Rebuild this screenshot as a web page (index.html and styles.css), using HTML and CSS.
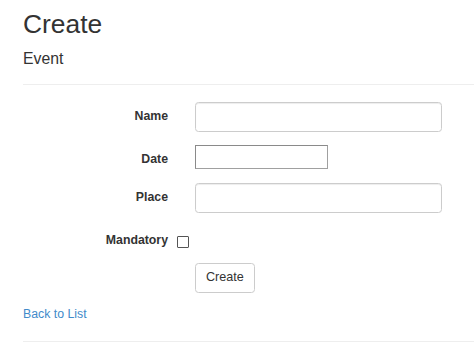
FILE: index.html
```html
<!DOCTYPE html>
<html lang="en">

<head>
    <meta charset="UTF-8">
    <meta name="viewport" content="width=device-width, initial-scale=1.0">
    <title>Create - Event</title>
    <link rel="stylesheet" href="styles.css">
</head>

<body>
    <div class="container">
        <h2>Create</h2>

        <form class="form-horizontal">
            <h4>Event</h4>
            <hr>

            <div class="form-group">
                <label class="control-label" for="Name">Name</label>
                <div class="field">
                    <input class="form-control" id="Name" name="Name" type="text">
                </div>
            </div>

            <div class="form-group">
                <label class="control-label" for="Date">Date</label>
                <div class="field">
                    <input class="date-input" id="Date" name="Date" type="text">
                </div>
            </div>

            <div class="form-group">
                <label class="control-label" for="Place">Place</label>
                <div class="field">
                    <input class="form-control" id="Place" name="Place" type="text">
                </div>
            </div>

            <div class="form-group">
                <label class="control-label" for="Mandatory">Mandatory</label>
                <input class="check" id="Mandatory" name="Mandatory" type="checkbox">
            </div>

            <div class="form-group">
                <div class="field offset">
                    <input type="submit" value="Create" class="btn">
                </div>
            </div>
        </form>

        <div class="back">
            <a href="#">Back to List</a>
        </div>

        <hr class="footer-line">
    </div>
</body>

</html>
```

FILE: styles.css
```css
body {
    margin: 0;
    padding: 0;
    font-family: "Liberation Sans", Arial, sans-serif;
    font-size: 12.3px;
    line-height: 17.6px;
    color: #333;
    background-color: #fff;
}

.container {
    padding-left: 23px;
    overflow: hidden;
}

h2 {
    font-size: 26.4px;
    font-weight: normal;
    line-height: 29px;
    margin: 10px 0 0;
}

h4 {
    font-size: 15.8px;
    font-weight: normal;
    line-height: 17.4px;
    margin: 11px 0 0;
}

hr {
    border: 0;
    border-top: 1px solid #eee;
    margin: 17px 0 17px;
}

.form-group {
    display: flex;
    align-items: flex-start;
    margin-bottom: 13px;
}

.control-label {
    width: 145px;
    flex-shrink: 0;
    padding-top: 6px;
    text-align: right;
    font-weight: bold;
}

.field {
    padding-left: 27px;
}

.offset {
    margin-left: 145px;
}

.form-control {
    display: block;
    box-sizing: border-box;
    width: 247px;
    height: 30px;
    padding: 5px 10px;
    font: inherit;
    color: #555;
    border: 1px solid #ccc;
    border-radius: 3.5px;
    box-shadow: inset 0 1px 1px rgba(0, 0, 0, 0.075);
    margin: 0;
}

.date-input {
    display: block;
    box-sizing: border-box;
    width: 133px;
    height: 24px;
    margin: 0 0 1px;
    padding: 2px 4px;
    font: inherit;
    border: 1px solid #a0a0a0;
    border-top-color: #8a8a8a;
    border-left-color: #8a8a8a;
    border-radius: 0;
}

.check {
    appearance: none;
    -webkit-appearance: none;
    box-sizing: border-box;
    width: 12px;
    height: 12px;
    margin: 10px 0 0 9px;
    border: 1px solid #555;
    border-radius: 1px;
    background: #fff;
}

.btn {
    box-sizing: border-box;
    height: 30px;
    padding: 5px 10px;
    font: inherit;
    font-size: 12.6px;
    color: #333;
    background-color: #fff;
    border: 1px solid #ccc;
    border-radius: 3.5px;
    margin: 0;
}

.back {
    margin-top: 0;
}

a {
    color: #428bca;
    text-decoration: none;
}

.footer-line {
    margin: 17px 0 0;
}
```
